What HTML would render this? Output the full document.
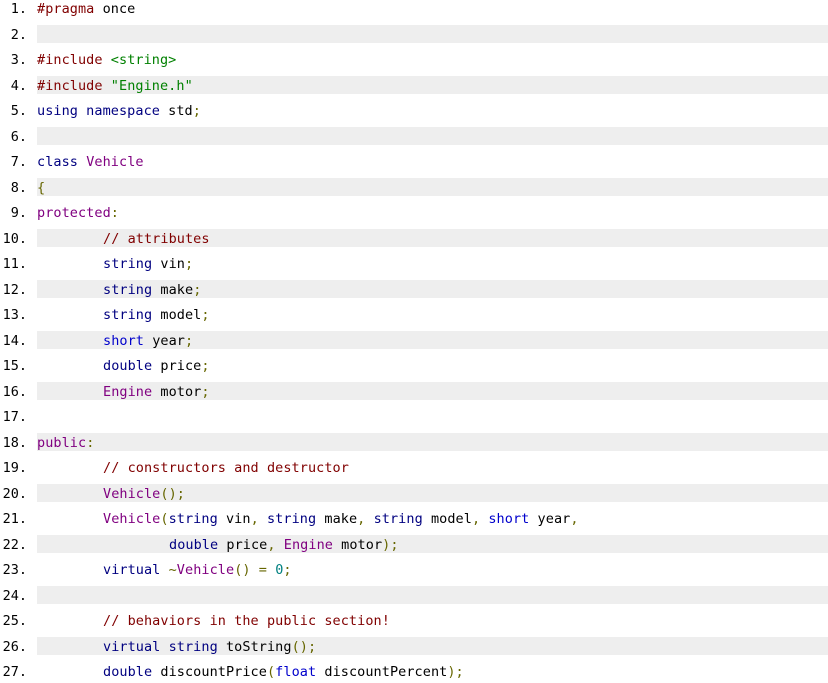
<!DOCTYPE html>
<html><head><meta charset="utf-8"><style>
body{margin:0;background:#fff;width:828px;height:683px;overflow:hidden;position:relative;font-family:"DejaVu Sans Mono","Liberation Mono",monospace;font-size:13.5px;letter-spacing:0.07px;color:#000}
.r{position:absolute;left:0;width:828px;height:18px;line-height:20px;white-space:pre}
.n{position:absolute;left:0;width:27px;text-align:right;color:#000;letter-spacing:0}
.c{position:absolute;left:37px;right:0;top:0;height:18px}
.s .c{background:#eee}
.t1{padding-left:66px}.t2{padding-left:132px}
.pp{color:#800000}.str{color:#008000}.kw{color:#000080}.ty{color:#800080}.p{color:#666600}.cm{color:#800000}.num{color:#008080}.bl{color:#0000cc}
</style></head><body>
<div class="r" style="top:-1px"><span class="n">1.</span><div class="c"><span class="pp">#pragma</span> once</div></div>
<div class="r s" style="top:24.5px"><span class="n">2.</span><div class="c"></div></div>
<div class="r" style="top:50px"><span class="n">3.</span><div class="c"><span class="pp">#include</span> <span class="str">&lt;string&gt;</span></div></div>
<div class="r s" style="top:75.5px"><span class="n">4.</span><div class="c"><span class="pp">#include</span> <span class="str">"Engine.h"</span></div></div>
<div class="r" style="top:101px"><span class="n">5.</span><div class="c"><span class="kw">using namespace</span> std<span class="p">;</span></div></div>
<div class="r s" style="top:126.5px"><span class="n">6.</span><div class="c"></div></div>
<div class="r" style="top:152px"><span class="n">7.</span><div class="c"><span class="kw">class</span> <span class="ty">Vehicle</span></div></div>
<div class="r s" style="top:177.5px"><span class="n">8.</span><div class="c"><span class="p">{</span></div></div>
<div class="r" style="top:203px"><span class="n">9.</span><div class="c"><span class="ty">protected</span><span class="p">:</span></div></div>
<div class="r s" style="top:228.5px"><span class="n">10.</span><div class="c t1"><span class="cm">// attributes</span></div></div>
<div class="r" style="top:254px"><span class="n">11.</span><div class="c t1"><span class="kw">string</span> vin<span class="p">;</span></div></div>
<div class="r s" style="top:279.5px"><span class="n">12.</span><div class="c t1"><span class="kw">string</span> make<span class="p">;</span></div></div>
<div class="r" style="top:305px"><span class="n">13.</span><div class="c t1"><span class="kw">string</span> model<span class="p">;</span></div></div>
<div class="r s" style="top:330.5px"><span class="n">14.</span><div class="c t1"><span class="bl">short</span> year<span class="p">;</span></div></div>
<div class="r" style="top:356px"><span class="n">15.</span><div class="c t1"><span class="kw">double</span> price<span class="p">;</span></div></div>
<div class="r s" style="top:381.5px"><span class="n">16.</span><div class="c t1"><span class="ty">Engine</span> motor<span class="p">;</span></div></div>
<div class="r" style="top:407px"><span class="n">17.</span><div class="c"></div></div>
<div class="r s" style="top:432.5px"><span class="n">18.</span><div class="c"><span class="ty">public</span><span class="p">:</span></div></div>
<div class="r" style="top:458px"><span class="n">19.</span><div class="c t1"><span class="cm">// constructors and destructor</span></div></div>
<div class="r s" style="top:483.5px"><span class="n">20.</span><div class="c t1"><span class="ty">Vehicle</span><span class="p">();</span></div></div>
<div class="r" style="top:509px"><span class="n">21.</span><div class="c t1"><span class="ty">Vehicle</span><span class="p">(</span><span class="kw">string</span> vin<span class="p">,</span> <span class="kw">string</span> make<span class="p">,</span> <span class="kw">string</span> model<span class="p">,</span> <span class="bl">short</span> year<span class="p">,</span></div></div>
<div class="r s" style="top:534.5px"><span class="n">22.</span><div class="c t2"><span class="kw">double</span> price<span class="p">,</span> <span class="ty">Engine</span> motor<span class="p">);</span></div></div>
<div class="r" style="top:560px"><span class="n">23.</span><div class="c t1"><span class="kw">virtual</span> <span class="p">~</span><span class="ty">Vehicle</span><span class="p">()</span> <span class="p">=</span> <span class="num">0</span><span class="p">;</span></div></div>
<div class="r s" style="top:585.5px"><span class="n">24.</span><div class="c"></div></div>
<div class="r" style="top:611px"><span class="n">25.</span><div class="c t1"><span class="cm">// behaviors in the public section!</span></div></div>
<div class="r s" style="top:636.5px"><span class="n">26.</span><div class="c t1"><span class="kw">virtual string</span> toString<span class="p">();</span></div></div>
<div class="r" style="top:662px"><span class="n">27.</span><div class="c t1"><span class="kw">double</span> discountPrice<span class="p">(</span><span class="bl">float</span> discountPercent<span class="p">);</span></div></div>
</body></html>
